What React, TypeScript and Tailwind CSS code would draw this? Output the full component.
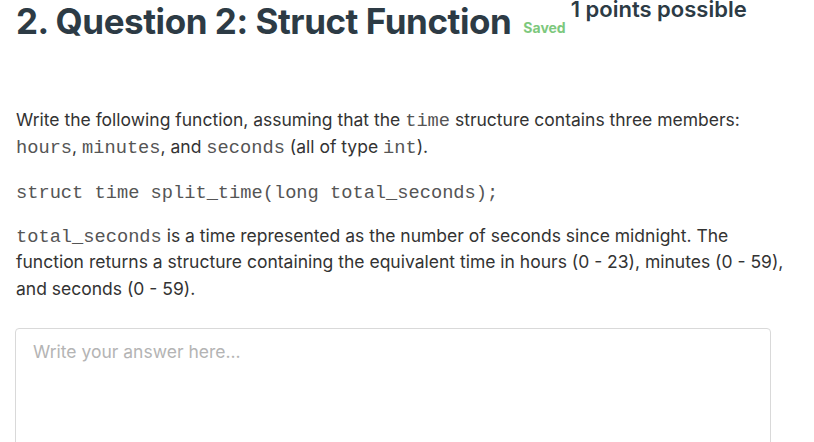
import React from 'react';

const Code: React.FC<{ children: React.ReactNode }> = ({ children }) => (
    <code className="font-['Liberation_Mono',monospace] text-[18.7px] leading-none text-[#555]">{children}</code>
);

export default function App() {
    return (
        <div className="w-[814px] h-[442px] overflow-hidden bg-white font-['Inter',sans-serif] text-[#2d3b45]">
            <div className="pl-4 pr-[30px]">
                <div className="flex items-start">
                    <h2 className="mt-[-2px] text-[35px] font-bold leading-[46px] tracking-[-0.45px]">2. Question 2: Struct Function</h2>
                    <span className="ml-3 mt-[17px] text-[14px] font-bold text-[#7dc87d]">Saved</span>
                    <span className="ml-[5px] mt-[-5px] text-[22px] font-semibold leading-[28px]">1 points possible</span>
                </div>

                <div className="mt-[63px] text-[17.5px] leading-[26.5px] text-[#333]">
                    <p>
                        Write the following function, assuming that the <Code>time</Code> structure contains three members:
                        <br />
                        <Code>hours</Code>, <Code>minutes</Code>, and <Code>seconds</Code> (all of type <Code>int</Code>).
                    </p>
                    <p className="mt-[19px]">
                        <Code>struct time split_time(long total_seconds);</Code>
                    </p>
                    <p className="mt-[17px]">
                        <Code>total_seconds</Code> is a time represented as the number of seconds since midnight. The
                        <br />
                        function returns a structure containing the equivalent time in hours (0 - 23), minutes (0 - 59),
                        <br />
                        and seconds (0 - 59).
                    </p>
                </div>

                <div className="mt-[26px] w-[756px] h-[140px] -ml-px rounded-[4px] border border-[#d9d9d9] px-[17px] pt-[10px]">
                    <span className="text-[17.5px] text-[#b4b4b4]">Write your answer here...</span>
                </div>
            </div>
        </div>
    );
}
